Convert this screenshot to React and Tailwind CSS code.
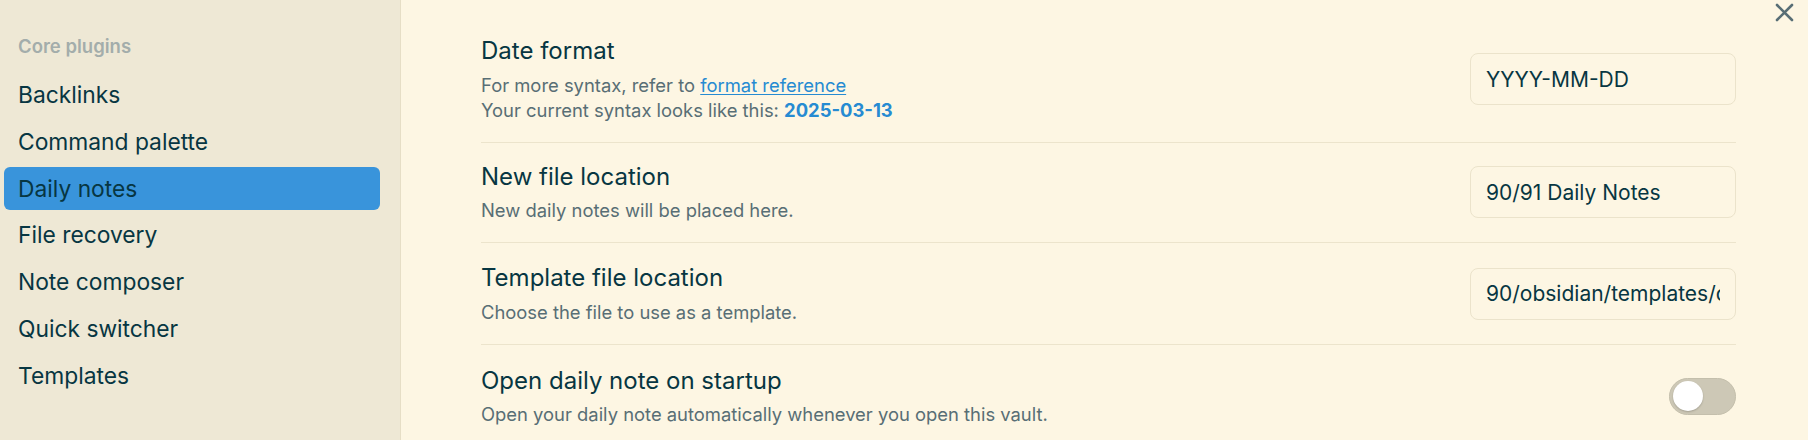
import React from 'react';

const plugins = ['Backlinks', 'Command palette', 'Daily notes', 'File recovery', 'Note composer', 'Quick switcher', 'Templates'];

const TextSetting = ({ name, children, value }) => (
  <div className="flex items-center justify-between border-b border-[#ece4cc] pt-[19px] pb-[19px]">
    <div>
      <div className="text-[24px] leading-[30px] text-[#073642]">{name}</div>
      <div className="mt-[6.5px] text-[18.4px] leading-[25px] text-[#586e75]">{children}</div>
    </div>
    <input
      readOnly
      value={value}
      className="h-[52px] w-[266px] rounded-[8px] border border-[#ebe3cb] bg-[#fdf6e3] px-[15px] text-[21px] text-[#073642] outline-none"
    />
  </div>
);

const App = () => {
  return (
    <div className="flex h-[440px] w-full overflow-hidden bg-[#fdf6e3] font-['Inter',sans-serif]">
      {/* Sidebar */}
      <nav className="w-[401px] shrink-0 border-r border-[#e6dec6] bg-[#eee8d5] pl-[4px] pr-[20px] pt-[34px]">
        <div className="h-[24px] pl-[14px] text-[18.5px] leading-[24px] font-semibold text-[#a3adab]">Core plugins</div>
        <div className="mt-[15.5px] flex flex-col gap-[3.8px]">
          {plugins.map((p) => (
            <div
              key={p}
              className={
                'flex h-[43px] items-center rounded-[6px] pl-[14px] text-[22.8px] text-[#073642] ' +
                (p === 'Daily notes' ? 'bg-[#3994db]' : '')
              }
            >
              {p}
            </div>
          ))}
        </div>
      </nav>

      {/* Settings */}
      <main className="relative flex-1 pl-[80px] pr-[72px] pt-[17px]">
        <button className="absolute right-[14px] top-[2px] flex h-[20px] w-[20px] items-center justify-center text-[#586e75]">
          <svg width="19" height="19" viewBox="0 0 19 19" fill="none" stroke="currentColor" strokeWidth="2.6" strokeLinecap="round">
            <path d="M2 2 L17 17 M17 2 L2 17" />
          </svg>
        </button>

        <TextSetting name="Date format" value="YYYY-MM-DD">
          For more syntax, refer to{' '}
          <a href="#" className="text-[#268bd2] underline underline-offset-2">format reference</a>
          <br />
          Your current syntax looks like this: <span className="font-bold text-[#268bd2]">2025-03-13</span>
        </TextSetting>

        <TextSetting name="New file location" value="90/91 Daily Notes">
          New daily notes will be placed here.
        </TextSetting>

        <div className="flex items-center justify-between border-b border-[#ece4cc] pt-[20px] pb-[19px]">
          <div>
            <div className="text-[24px] leading-[30px] text-[#073642]">Template file location</div>
            <div className="mt-[6.5px] text-[18.4px] leading-[25px] text-[#586e75]">Choose the file to use as a template.</div>
          </div>
          <input
            readOnly
            value="90/obsidian/templates/daily-note"
            className="h-[52px] w-[266px] rounded-[8px] border border-[#ebe3cb] bg-[#fdf6e3] px-[15px] text-[21px] text-[#073642] outline-none"
          />
        </div>

        <div className="flex items-center justify-between pt-[21px] pb-[20px]">
          <div>
            <div className="text-[24px] leading-[30px] text-[#073642]">Open daily note on startup</div>
            <div className="mt-[6.5px] text-[18.4px] leading-[25px] text-[#586e75]">
              Open your daily note automatically whenever you open this vault.
            </div>
          </div>
          <div className="flex h-[37px] w-[67px] items-center rounded-full border border-[#c4bfac] bg-[#cdc8b6] pl-[3px]">
            <div className="h-[30px] w-[30px] rounded-full bg-white shadow-[0_1px_2px_rgba(0,0,0,0.2)]" />
          </div>
        </div>
      </main>
    </div>
  );
};

export default App;
